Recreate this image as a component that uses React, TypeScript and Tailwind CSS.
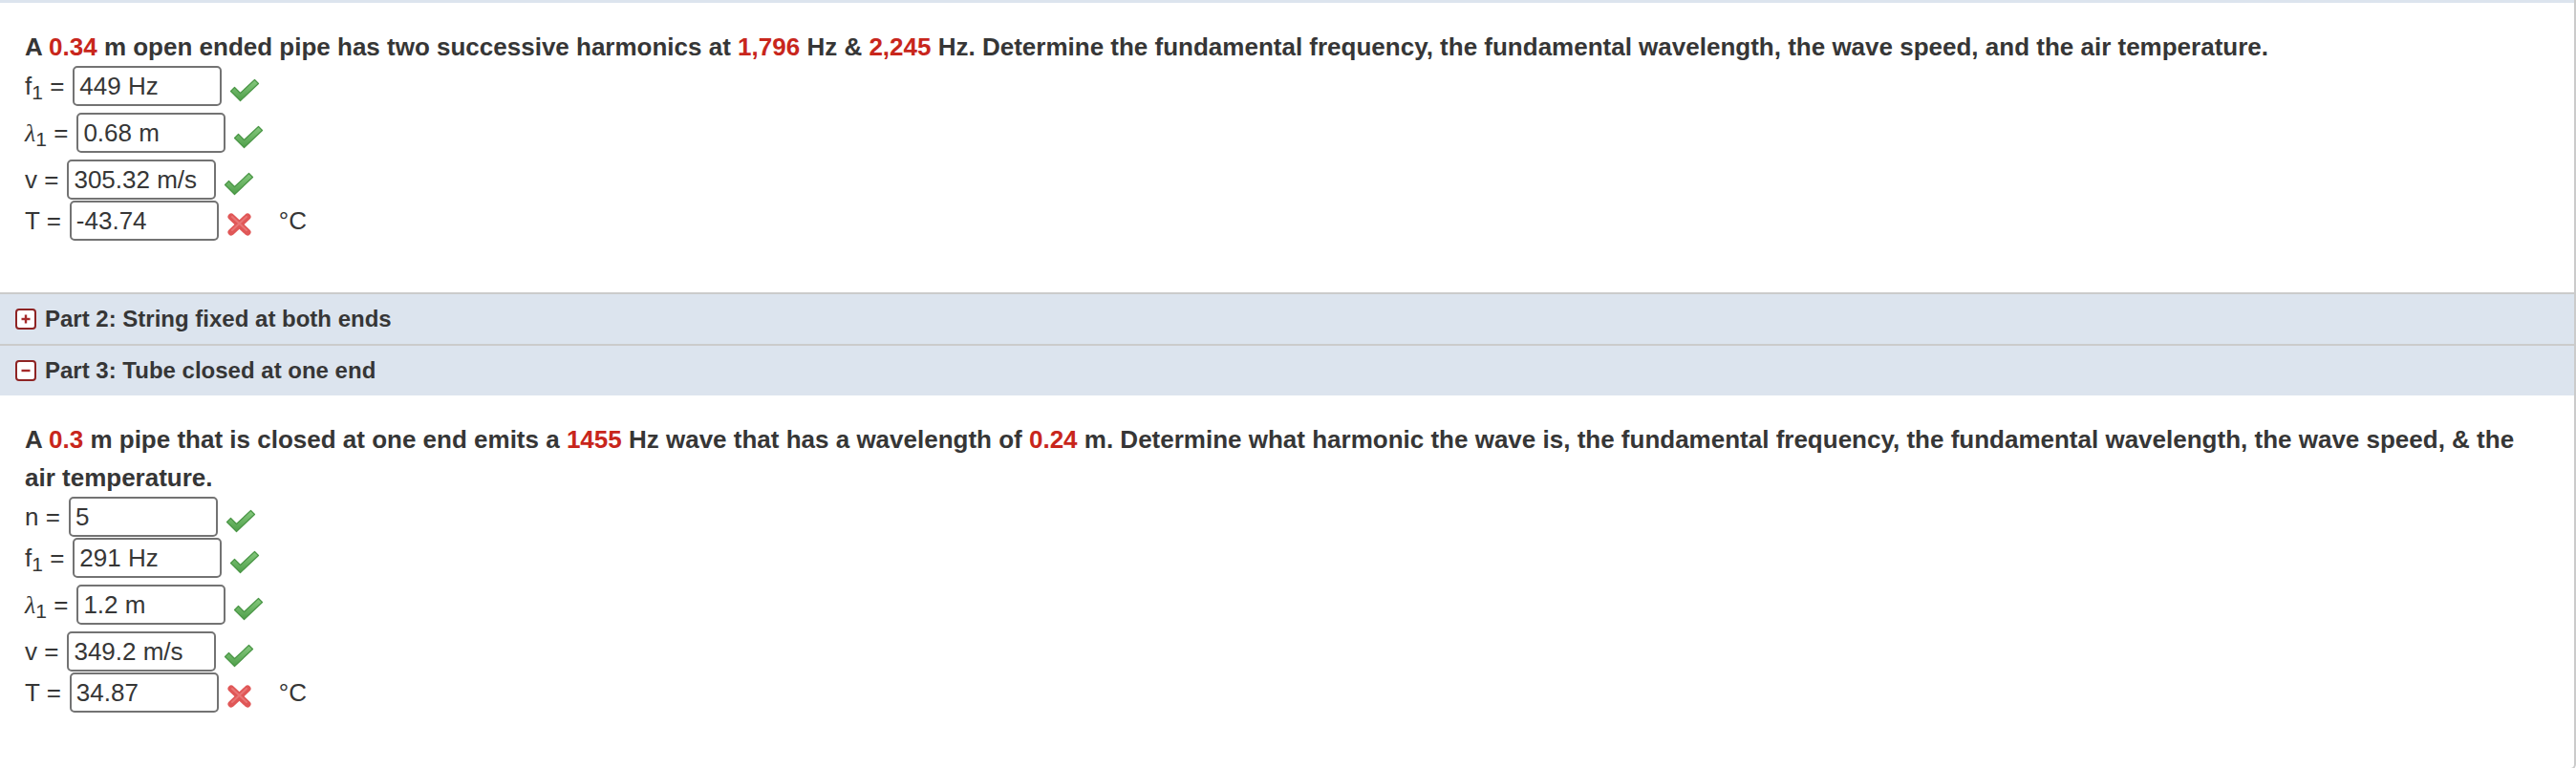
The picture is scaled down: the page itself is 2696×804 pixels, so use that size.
import React from "react";

type Row = {
  label: React.ReactNode;
  value: string;
  ok: boolean;
  unit?: string;
  tall?: boolean;
};

const Red = ({ children }: { children: React.ReactNode }) => (
  <span className="text-[#c8261c]">{children}</span>
);

function Check() {
  return (
    <svg width="32" height="25" viewBox="0 0 32 25" className="ml-[8px] mt-[8px] shrink-0">
      <defs>
        <linearGradient id="chk" x1="0" y1="0" x2="0" y2="1">
          <stop offset="0" stopColor="#86c97e" />
          <stop offset="1" stopColor="#4f9f4a" />
        </linearGradient>
      </defs>
      <path
        d="M1.5 13.5 L5.5 9.5 L11.5 15.5 L26.5 1.5 L30.5 5.5 L11.5 23.5 Z"
        fill="url(#chk)"
        stroke="#4a9646"
        strokeWidth="1.2"
        strokeLinejoin="round"
      />
    </svg>
  );
}

function Cross() {
  return (
    <svg width="27" height="26" viewBox="0 0 27 26" className="ml-[8px] mt-[8px] shrink-0">
      <g stroke="#e05757" strokeWidth="7" strokeLinecap="round">
        <line x1="5" y1="5" x2="22" y2="21" />
        <line x1="22" y1="5" x2="5" y2="21" />
      </g>
      <g stroke="#ef8a8a" strokeWidth="2" strokeLinecap="round" opacity="0.6">
        <line x1="6" y1="5" x2="21" y2="19" />
        <line x1="21" y1="5" x2="6" y2="19" />
      </g>
    </svg>
  );
}

function ToggleIcon({ open }: { open: boolean }) {
  return (
    <svg width="22" height="22" viewBox="0 0 22 22" className="shrink-0">
      <rect x="1" y="1" width="20" height="20" rx="3" fill="#ffffff" stroke="#8e2424" strokeWidth="2" />
      <line x1="6.5" y1="11" x2="15.5" y2="11" stroke="#a52a2a" strokeWidth="2.4" />
      {!open && <line x1="11" y1="6.5" x2="11" y2="15.5" stroke="#a52a2a" strokeWidth="2.4" />}
    </svg>
  );
}

const F1 = (
  <>
    f<sub className="text-[21px]">1</sub> =
  </>
);
const L1 = (
  <>
    <span className="font-['Liberation_Serif',serif] italic">λ</span>
    <sub className="text-[21px]">1</sub> =
  </>
);

function AnswerRow({ row }: { row: Row }) {
  return (
    <div className={`flex items-center h-[42px] ${row.tall ? "mb-[7px]" : "mb-[1px]"}`}>
      <span className="whitespace-nowrap">{row.label}</span>
      <div className="ml-[9px] w-[156px] h-[42px] border-2 border-[#737373] rounded-[5px] pl-[5px] flex items-center bg-white">
        {row.value}
      </div>
      {row.ok ? <Check /> : <Cross />}
      {row.unit && <span className="ml-[28px]">{row.unit}</span>}
    </div>
  );
}

function PartHeader({ title, open }: { title: string; open: boolean }) {
  return (
    <div className="h-[54px] border-t-2 border-[#cbcbcb] bg-[#dce4ee] flex items-center pl-[16px]">
      <ToggleIcon open={open} />
      <span className="ml-[9px] font-bold text-[24px]">{title}</span>
    </div>
  );
}

export default function App() {
  const part1: Row[] = [
    { label: F1, value: "449 Hz", ok: true, tall: true },
    { label: L1, value: "0.68 m", ok: true, tall: true },
    { label: "v =", value: "305.32 m/s", ok: true },
    { label: "T =", value: "-43.74", ok: false, unit: "°C" },
  ];

  const part3: Row[] = [
    { label: "n =", value: "5", ok: true },
    { label: F1, value: "291 Hz", ok: true, tall: true },
    { label: L1, value: "1.2 m", ok: true, tall: true },
    { label: "v =", value: "349.2 m/s", ok: true },
    { label: "T =", value: "34.87", ok: false, unit: "°C" },
  ];

  return (
    <div className="w-[2696px] h-[804px] bg-white text-[#363636] text-[26px] font-['Liberation_Sans',Arial,sans-serif] overflow-hidden">
      <div className="border-r-2 border-[#cbcbcb]">
        <div className="h-[3px] bg-[#dce4ee]" />

        {/* part 1 */}
        <div className="pl-[26px] pt-[26px] pb-[53px]">
          <p className="font-bold text-[26px] leading-[40px] whitespace-nowrap">
            A <Red>0.34</Red> m open ended pipe has two successive harmonics at <Red>1,796</Red> Hz &amp;{" "}
            <Red>2,245</Red> Hz. Determine the fundamental frequency, the fundamental wavelength, the wave speed,
            and the air temperature.
          </p>
          {part1.map((r, i) => (
            <AnswerRow key={i} row={r} />
          ))}
        </div>

        <PartHeader title="Part 2: String fixed at both ends" open={false} />
        <PartHeader title="Part 3: Tube closed at one end" open={true} />

        {/* part 3 */}
        <div className="pl-[26px] pt-[26px] pb-[51px]">
          <p className="font-bold text-[26px] leading-[40px] whitespace-nowrap">
            A <Red>0.3</Red> m pipe that is closed at one end emits a <Red>1455</Red> Hz wave that has a wavelength
            of <Red>0.24</Red> m. Determine what harmonic the wave is, the fundamental frequency, the fundamental
            wavelength, the wave speed, &amp; the
            <br />
            air temperature.
          </p>
          {part3.map((r, i) => (
            <AnswerRow key={i} row={r} />
          ))}
        </div>
      </div>
      <div className="ml-[254px] h-[8px] border-b-2 border-r-2 border-[#cbcbcb] rounded-br-[6px]" />
    </div>
  );
}
